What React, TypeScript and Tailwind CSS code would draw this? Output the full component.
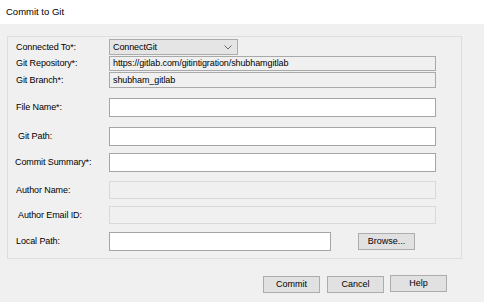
import React from "react";

const font = "font-['Liberation_Sans',Arial,sans-serif]";

interface RowProps {
  label: string;
  rowClass: string;
  labelClass?: string;
  children: React.ReactNode;
}

const Row = ({ label, rowClass, labelClass = "pl-[8px]", children }: RowProps) => (
  <div className={`flex items-center ${rowClass}`}>
    <div className={`w-[101px] shrink-0 tracking-[-0.1px] text-black ${labelClass}`}>
      {label}
    </div>
    {children}
  </div>
);

const Field = ({ value, kind = "edit", width = "w-[327px]" }: { value?: string; kind?: "edit" | "readonly" | "disabled"; width?: string }) => {
  const look =
    kind === "edit"
      ? "bg-white border-[#a5a5a5]"
      : kind === "readonly"
        ? "bg-[#f0f0f0] border-[#a9a9a9]"
        : "bg-[#f0f0f0] border-[#d9d9d9]";
  return (
    <div className={`${width} h-full border ${look} flex items-center pl-[3px] tracking-[-0.1px] text-black`}>
      {value}
    </div>
  );
};

const Button = ({ label, className = "" }: { label: string; className?: string }) => (
  <div className={`w-[57px] h-[17px] border border-[#adadad] bg-[#e1e1e1] flex items-center justify-center text-black ${className}`}>
    {label}
  </div>
);

export default function App() {
  return (
    <div className={`w-[484px] h-[302px] bg-[#f0f0f0] text-[9px] leading-none ${font}`}>
      <div className="h-[24px] bg-white flex items-center pl-[6px] text-[9.5px] text-black">
        Commit to Git
      </div>
      <div className="ml-[7px] mt-[12px] w-[455px] h-[223px] border border-[#dedede] pt-[2px]">
        <Row label="Connected To*:" rowClass="h-[16px]">
          <div className="w-[129px] h-full border border-[#acacac] bg-[#e5e5e5] flex items-center justify-between pl-[3px] pr-[5px] text-black">
            <span className="tracking-[-0.1px]">ConnectGit</span>
            <svg width="8" height="5" viewBox="0 0 8 5">
              <polyline points="0.5,0.5 4,4 7.5,0.5" fill="none" stroke="#6a6a6a" strokeWidth="1" />
            </svg>
          </div>
        </Row>
        <Row label="Git Repository*:" rowClass="h-[15px] mt-[1px]">
          <Field value="https://gitlab.com/gitintigration/shubhamgitlab" kind="readonly" />
        </Row>
        <Row label="Git Branch*:" rowClass="h-[16px] mt-[1px]">
          <Field value="shubham_gitlab" kind="readonly" />
        </Row>
        <Row label="File Name*:" rowClass="h-[19px] mt-[10px]">
          <Field />
        </Row>
        <Row label="Git Path:" rowClass="h-[19px] mt-[10px]" labelClass="pl-[10px]">
          <Field />
        </Row>
        <Row label="Commit Summary*:" rowClass="h-[19px] mt-[7px]" labelClass="pl-[7px]">
          <Field />
        </Row>
        <Row label="Author Name:" rowClass="h-[18px] mt-[9px]">
          <Field kind="disabled" />
        </Row>
        <Row label="Author Email ID:" rowClass="h-[18px] mt-[7px]" labelClass="pl-[10px]">
          <Field kind="disabled" />
        </Row>
        <Row label="Local Path:" rowClass="h-[19px] mt-[8px]">
          <Field width="w-[222px]" />
          <Button label="Browse..." className="ml-[27px]" />
        </Row>
      </div>
      <div className="flex items-start ml-[263px] mt-[16px]">
        <Button label="Commit" className="mt-[1px]" />
        <Button label="Cancel" className="mt-[1px] ml-[7px]" />
        <Button label="Help" className="ml-[6px]" />
      </div>
    </div>
  );
}
